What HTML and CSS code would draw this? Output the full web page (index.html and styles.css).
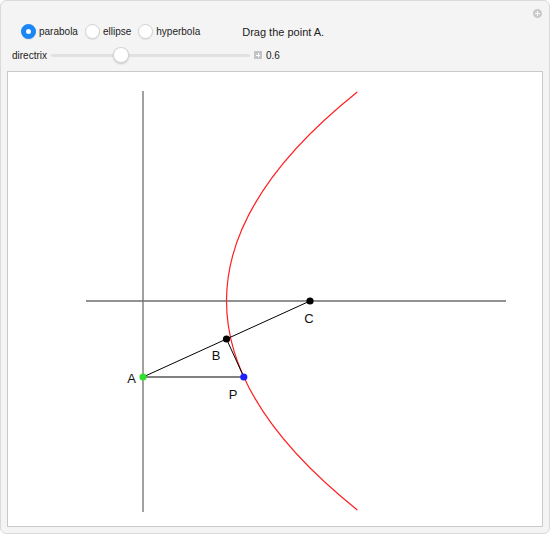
FILE: index.html
```html
<!DOCTYPE html>
<html lang="en">
<head>
  <meta charset="UTF-8" />
  <title>Parabola, Ellipse, Hyperbola</title>
  <link rel="stylesheet" href="styles.css">
</head>
<body>
  <div class="panel">
    <span class="corner-btn"></span>

    <div class="row choices">
      <label class="choice"><span class="radio on"></span>parabola</label>
      <label class="choice"><span class="radio"></span>ellipse</label>
      <label class="choice"><span class="radio"></span>hyperbola</label>
      <span class="hint">Drag the point A.</span>
    </div>

    <div class="row slider-row">
      <span class="slider-name">directrix</span>
      <div class="track">
        <span class="thumb"></span>
      </div>
      <span class="plus-box"></span>
      <span class="slider-value">0.6</span>
    </div>

    <div class="plot">
      <svg width="534" height="454" viewBox="8 72 534 454">
        <!-- directrix and axis -->
        <line x1="143" y1="91" x2="143" y2="512" class="axis" />
        <line x1="86" y1="301" x2="506" y2="301" class="axis" />
        <!-- conic -->
        <path d="M357.3 92 Q95.7 301 357.3 510" class="curve" />
        <!-- construction -->
        <line x1="143" y1="377" x2="310" y2="301" class="seg" />
        <line x1="143" y1="377" x2="243.8" y2="377" class="seg" />
        <line x1="226.5" y1="339" x2="243.8" y2="377" class="seg" />
        <circle cx="310" cy="301" r="3.6" fill="#000" />
        <circle cx="226.5" cy="339" r="3.6" fill="#000" />
        <circle cx="143" cy="377" r="3.6" fill="#2fe02f" />
        <circle cx="243.8" cy="377" r="3.6" fill="#1f1fff" />
        <text x="309" y="318" class="lbl">C</text>
        <text x="216" y="355" class="lbl">B</text>
        <text x="131.5" y="378" class="lbl">A</text>
        <text x="233" y="394" class="lbl">P</text>
      </svg>
    </div>
  </div>
</body>
</html>
```

FILE: styles.css
```css
body {
  margin: 0;
  font-family: "Liberation Sans", Arial, sans-serif;
  color: #222;
}
.panel {
  position: relative;
  width: 548px;
  height: 532px;
  border: 1px solid #dadada;
  border-radius: 6px;
  background: #f4f4f4;
}
.corner-btn {
  position: absolute;
  top: 8px;
  right: 7px;
  width: 9px;
  height: 9px;
  border-radius: 50%;
  background: #c9c9c9;
}
.corner-btn::before,
.corner-btn::after {
  content: "";
  position: absolute;
  background: #fff;
}
.corner-btn::before {
  left: 2px;
  top: 4px;
  width: 5px;
  height: 1px;
}
.corner-btn::after {
  left: 4px;
  top: 2px;
  width: 1px;
  height: 5px;
}
.row {
  display: flex;
  align-items: center;
}
/* radio choices */
.choices {
  margin-top: 23px;
  padding-left: 20px;
  height: 15px;
  font-size: 10px;
}
.choice {
  display: flex;
  align-items: center;
  gap: 3px;
  margin-right: 7px;
}
.radio {
  box-sizing: border-box;
  width: 15px;
  height: 15px;
  border-radius: 50%;
  background: #fff;
  border: 1px solid #d2d2d2;
  box-shadow: 0 1px 1px rgba(0, 0, 0, 0.08);
}
.radio.on {
  border: 5px solid #1b86f6;
  background: #fff;
}
.hint {
  margin-left: 35px;
  font-size: 11px;
}
/* slider */
.slider-row {
  margin-top: 8px;
  padding-left: 11px;
  height: 16px;
  font-size: 10px;
}
.track {
  position: relative;
  width: 199px;
  height: 3px;
  margin-left: 4px;
  border-radius: 2px;
  background: #e1e1e1;
}
.thumb {
  position: absolute;
  left: 62px;
  top: -7px;
  box-sizing: border-box;
  width: 16px;
  height: 16px;
  border-radius: 50%;
  background: #fff;
  border: 1px solid #d6d6d6;
  box-shadow: 0 1px 2px rgba(0, 0, 0, 0.18);
}
.plus-box {
  position: relative;
  width: 8px;
  height: 8px;
  margin-left: 4px;
  background: #c4c4c4;
}
.plus-box::before,
.plus-box::after {
  content: "";
  position: absolute;
  background: #fff;
}
.plus-box::before {
  left: 2px;
  top: 3.5px;
  width: 4px;
  height: 1px;
}
.plus-box::after {
  left: 3.5px;
  top: 2px;
  width: 1px;
  height: 4px;
}
.slider-value {
  margin-left: 4px;
  font-size: 10px;
}
/* plot */
.plot {
  margin: 8px 0 0 6px;
  width: 534px;
  height: 454px;
  border: 1px solid #c9c9c9;
  background: #fff;
}
.plot svg {
  display: block;
}
.axis {
  stroke: #6e6e6e;
  stroke-width: 1.3;
}
.curve {
  fill: none;
  stroke: #ff2020;
  stroke-width: 1.2;
}
.seg {
  stroke: #000;
  stroke-width: 1;
}
.lbl {
  font-family: "Liberation Sans", Arial, sans-serif;
  font-size: 13px;
  text-anchor: middle;
  dominant-baseline: central;
  fill: #111;
}
```
